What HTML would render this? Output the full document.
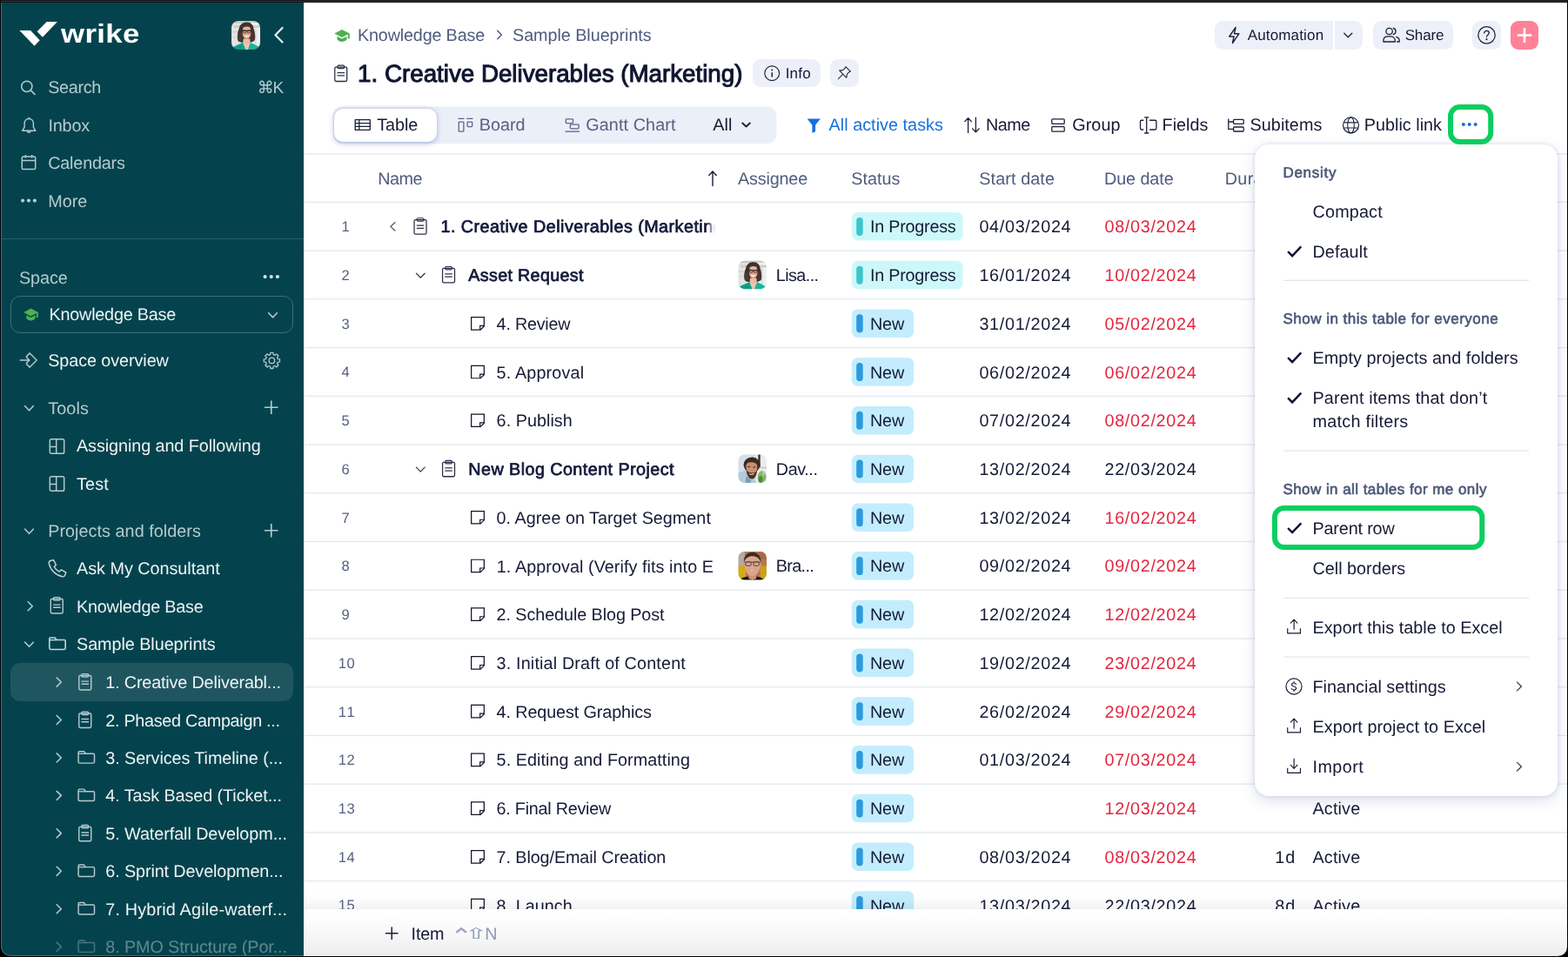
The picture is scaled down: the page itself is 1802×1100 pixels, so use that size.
<!DOCTYPE html>
<html lang="en"><head><meta charset="utf-8"><title>1. Creative Deliverables (Marketing) - Wrike</title>
<style>
html,body{margin:0;padding:0;width:1802px;height:1100px;overflow:hidden;background:#000;}
body{font-family:'Liberation Sans', 'DejaVu Sans', sans-serif;position:relative;-webkit-font-smoothing:antialiased;text-rendering:geometricPrecision;}
.a{position:absolute;display:block;box-sizing:border-box;}
.t{white-space:pre;}
svg{overflow:visible}
</style></head><body>
<div id="app" class="a" style="left:0;top:0;width:1802px;height:1100px;overflow:hidden;will-change:transform;">
<div class="a" style="left:349px;top:0px;width:1453px;height:1100px;background:#ffffff;"></div>
<svg class="a" style="left:349px;top:230px" width="1453" height="4" viewBox="0 0 1453 4"><rect x="0" y="1.75" width="1453" height="1.3" fill="#e3e8f1"/></svg>
<span class="a t" style="top:249px;height:23px;line-height:23px;font-size:16.6px;color:#56617f;left:392.47px;">1</span>
<svg class="a" style="left:448px;top:255px;" width="8" height="12" fill="none"><g transform="translate(0.30 0.10) scale(1.0000 1.0000)"><path d="M5.575 0.625L0.625 5.3L5.575 9.975" stroke="#4a5068" stroke-width="1.25" stroke-linecap="round" stroke-linejoin="round"/></g></svg>
<svg class="a" style="left:475px;top:250px;" width="17" height="21" fill="none"><g transform="translate(0.30 0.10) scale(0.9688 0.9900)"><rect x="0.8" y="2.6" width="14.4" height="16.6" rx="1.4" stroke="#2a2f45" stroke-width="1.3"/><rect x="4" y="0.7" width="8" height="3.4" rx="1.1" stroke="#2a2f45" stroke-width="1.17" fill="none"/><path d="M3.6 9.2H12.4M3.6 12.4H12.4" stroke="#2a2f45" stroke-width="1.3"/></g></svg>
<div class="a" style="left:500px;top:244.4px;width:322px;height:32px;overflow:hidden;-webkit-mask-image:linear-gradient(90deg,#000 0,#000 312px,transparent 322px);mask-image:linear-gradient(90deg,#000 0,#000 312px,transparent 322px);">
<span class="a t" style="top:3px;height:28px;line-height:28px;font-size:19.8px;color:#14193a;-webkit-text-stroke:0.73px #14193a;letter-spacing:0.447px;left:6.51px;">1. Creative Deliverables (Marketing)</span>
</div>
<svg class="a" style="left:976px;top:241px;" width="133" height="38" viewBox="0 0 133 38"><rect x="2.80" y="3.00" width="127.70" height="32.60" rx="7" fill="#cdf8f9"/></svg>
<svg class="a" style="left:982px;top:247px;" width="13" height="27" viewBox="0 0 13 27"><rect x="2.20" y="2.90" width="7.50" height="21.00" rx="3.6" fill="#3cc5cb"/></svg>
<span class="a t" style="top:247px;height:28px;line-height:28px;font-size:19.8px;color:#161a35;letter-spacing:-0.247px;left:1000.01px;">In Progress</span>
<span class="a t" style="top:247px;height:28px;line-height:28px;font-size:19.8px;color:#161a35;letter-spacing:0.685px;left:1125.41px;">04/03/2024</span>
<span class="a t" style="top:247px;height:28px;line-height:28px;font-size:19.8px;color:#e3263e;letter-spacing:0.685px;left:1269.51px;">08/03/2024</span>
<svg class="a" style="left:349px;top:286px" width="1453" height="4" viewBox="0 0 1453 4"><rect x="0" y="1.48" width="1453" height="1.3" fill="#e3e8f1"/></svg>
<span class="a t" style="top:305px;height:23px;line-height:23px;font-size:16.6px;color:#56617f;left:392.47px;">2</span>
<svg class="a" style="left:477px;top:313px;" width="13" height="8" fill="none"><g transform="translate(0.80 0.53) scale(1.0000 1.0000)"><path d="M0.65 0.65L5.5 5.6499999999999995L10.35 0.65" stroke="#3a4058" stroke-width="1.3" stroke-linecap="round" stroke-linejoin="round"/></g></svg>
<svg class="a" style="left:507px;top:305px;" width="18" height="22" fill="none"><g transform="translate(0.80 0.83) scale(0.9688 0.9900)"><rect x="0.8" y="2.6" width="14.4" height="16.6" rx="1.4" stroke="#2a2f45" stroke-width="1.3"/><rect x="4" y="0.7" width="8" height="3.4" rx="1.1" stroke="#2a2f45" stroke-width="1.17" fill="none"/><path d="M3.6 9.2H12.4M3.6 12.4H12.4" stroke="#2a2f45" stroke-width="1.3"/></g></svg>
<span class="a t" style="top:303px;height:28px;line-height:28px;font-size:19.8px;color:#14193a;-webkit-text-stroke:0.73px #14193a;letter-spacing:0.294px;left:538.31px;">Asset Request</span>
<svg class="a" style="left:848px;top:299px;" width="34" height="35" fill="none"><g transform="translate(0.50 0.63) scale(0.9848 0.9848)"><defs><clipPath id="av1"><rect x="0" y="0" width="33" height="33" rx="7"/></clipPath><filter id="av1f" x="-10%" y="-10%" width="120%" height="120%"><feGaussianBlur stdDeviation="0.55"/></filter></defs><g clip-path="url(#av1)"><g filter="url(#av1f)"><rect x="-3" y="-3" width="39" height="39" fill="#e3e3e1"/><rect x="-3" y="-3" width="39" height="5.5" fill="#c9c6be"/><rect x="22" y="2" width="14" height="34" fill="#eef0f3"/><rect x="26.5" y="8" width="2.2" height="20" fill="#d9dadd"/><rect x="3" y="5.2" width="30" height="2.6" fill="#d2cbbd"/><rect x="-2" y="12" width="9" height="1.4" fill="#cfcfd0"/><rect x="-2" y="18" width="8" height="1.2" fill="#d4d4d6"/><path d="M17 1.6C21.5 1.2 25.4 4.4 25.6 9.4C27.6 13.6 27 19.4 25 23.6C23 25.2 20.5 24.6 17.3 24.6C13.8 24.6 10.6 25.4 8.8 23.4C6.6 19.6 6.4 13.8 8.6 9.6C9.4 4.6 12.6 1.8 17 1.6Z" fill="#3d302d"/><ellipse cx="9.4" cy="19" rx="2.6" ry="5" fill="#4a3a35"/><ellipse cx="24.8" cy="18.6" rx="2.4" ry="5" fill="#46362f"/><path d="M13.6 20.5H21.4L21.8 33H12.6Z" fill="#e7bba6"/><ellipse cx="17.5" cy="14" rx="4.9" ry="7" fill="#dfa58d"/><ellipse cx="17.5" cy="9" rx="4.4" ry="2.6" fill="#e6b39c"/><path d="M12.4 11.4H22.6" stroke="#2f2624" stroke-width="1.1"/><rect x="12.9" y="10.9" width="4.1" height="2.9" rx="1" fill="none" stroke="#3a2f2d" stroke-width=".8"/><rect x="18" y="10.9" width="4.1" height="2.9" rx="1" fill="none" stroke="#3a2f2d" stroke-width=".8"/><path d="M14.9 17Q17.5 19.4 20.1 17Q17.5 18 14.9 17Z" fill="#fff" stroke="#fff" stroke-width=".7"/><path d="M-1 36L1.2 30.2L13.2 24.8L17.2 36Z" fill="#0ea68f"/><path d="M34 36L31 29.6L21.8 24.8L18 36Z" fill="#13b59c"/><path d="M3 31L12 27L14 33L4 34Z" fill="#0b8f7b" opacity=".55"/><path d="M13.2 24.8L17.5 33.5L21.8 24.8L17.5 27.6Z" fill="#edc7b4"/></g></g></g></svg>
<span class="a t" style="top:303px;height:28px;line-height:28px;font-size:19.8px;color:#161a35;letter-spacing:-0.583px;left:891.81px;">Lisa...</span>
<svg class="a" style="left:976px;top:297px;" width="133" height="38" viewBox="0 0 133 38"><rect x="2.80" y="2.73" width="127.70" height="32.60" rx="7" fill="#cdf8f9"/></svg>
<svg class="a" style="left:982px;top:303px;" width="13" height="27" viewBox="0 0 13 27"><rect x="2.20" y="2.63" width="7.50" height="21.00" rx="3.6" fill="#3cc5cb"/></svg>
<span class="a t" style="top:303px;height:28px;line-height:28px;font-size:19.8px;color:#161a35;letter-spacing:-0.247px;left:1000.01px;">In Progress</span>
<span class="a t" style="top:303px;height:28px;line-height:28px;font-size:19.8px;color:#161a35;letter-spacing:0.685px;left:1125.41px;">16/01/2024</span>
<span class="a t" style="top:303px;height:28px;line-height:28px;font-size:19.8px;color:#e3263e;letter-spacing:0.685px;left:1269.51px;">10/02/2024</span>
<svg class="a" style="left:349px;top:342px" width="1453" height="4" viewBox="0 0 1453 4"><rect x="0" y="1.21" width="1453" height="1.3" fill="#e3e8f1"/></svg>
<span class="a t" style="top:361px;height:23px;line-height:23px;font-size:16.6px;color:#56617f;left:392.47px;">3</span>
<svg class="a" style="left:541px;top:363px;" width="17" height="18" fill="none"><g transform="translate(0.00 0.96) scale(1.0000 0.9812)"><path d="M0.65 0.65H15.35V11.2L11.2 15.35H0.65Z" stroke="#14162a" stroke-width="1.25" stroke-linejoin="miter"/><path d="M10.7 15.2V10.6H15.3" stroke="#14162a" stroke-width="1.2"/></g></svg>
<span class="a t" style="top:359px;height:28px;line-height:28px;font-size:19.8px;color:#161a35;letter-spacing:-0.235px;left:570.61px;">4. Review</span>
<svg class="a" style="left:976px;top:353px;" width="77" height="38" viewBox="0 0 77 38"><rect x="2.80" y="2.46" width="71.40" height="32.60" rx="7" fill="#c3edfd"/></svg>
<svg class="a" style="left:982px;top:359px;" width="13" height="27" viewBox="0 0 13 27"><rect x="2.20" y="2.36" width="7.50" height="21.00" rx="3.6" fill="#2d9ade"/></svg>
<span class="a t" style="top:359px;height:28px;line-height:28px;font-size:19.8px;color:#161a35;letter-spacing:-0.198px;left:1000.01px;">New</span>
<span class="a t" style="top:359px;height:28px;line-height:28px;font-size:19.8px;color:#161a35;letter-spacing:0.685px;left:1125.41px;">31/01/2024</span>
<span class="a t" style="top:359px;height:28px;line-height:28px;font-size:19.8px;color:#e3263e;letter-spacing:0.685px;left:1269.51px;">05/02/2024</span>
<svg class="a" style="left:349px;top:397px" width="1453" height="4" viewBox="0 0 1453 4"><rect x="0" y="1.94" width="1453" height="1.3" fill="#e3e8f1"/></svg>
<span class="a t" style="top:416px;height:23px;line-height:23px;font-size:16.6px;color:#56617f;left:392.47px;">4</span>
<svg class="a" style="left:541px;top:419px;" width="17" height="18" fill="none"><g transform="translate(0.00 0.69) scale(1.0000 0.9812)"><path d="M0.65 0.65H15.35V11.2L11.2 15.35H0.65Z" stroke="#14162a" stroke-width="1.25" stroke-linejoin="miter"/><path d="M10.7 15.2V10.6H15.3" stroke="#14162a" stroke-width="1.2"/></g></svg>
<span class="a t" style="top:415px;height:28px;line-height:28px;font-size:19.8px;color:#161a35;letter-spacing:0.150px;left:570.61px;">5. Approval</span>
<svg class="a" style="left:976px;top:409px;" width="77" height="38" viewBox="0 0 77 38"><rect x="2.80" y="2.19" width="71.40" height="32.60" rx="7" fill="#c3edfd"/></svg>
<svg class="a" style="left:982px;top:415px;" width="13" height="27" viewBox="0 0 13 27"><rect x="2.20" y="2.09" width="7.50" height="21.00" rx="3.6" fill="#2d9ade"/></svg>
<span class="a t" style="top:415px;height:28px;line-height:28px;font-size:19.8px;color:#161a35;letter-spacing:-0.198px;left:1000.01px;">New</span>
<span class="a t" style="top:415px;height:28px;line-height:28px;font-size:19.8px;color:#161a35;letter-spacing:0.685px;left:1125.41px;">06/02/2024</span>
<span class="a t" style="top:415px;height:28px;line-height:28px;font-size:19.8px;color:#e3263e;letter-spacing:0.685px;left:1269.51px;">06/02/2024</span>
<svg class="a" style="left:349px;top:453px" width="1453" height="4" viewBox="0 0 1453 4"><rect x="0" y="1.67" width="1453" height="1.3" fill="#e3e8f1"/></svg>
<span class="a t" style="top:472px;height:23px;line-height:23px;font-size:16.6px;color:#56617f;left:392.47px;">5</span>
<svg class="a" style="left:541px;top:475px;" width="17" height="18" fill="none"><g transform="translate(0.00 0.42) scale(1.0000 0.9812)"><path d="M0.65 0.65H15.35V11.2L11.2 15.35H0.65Z" stroke="#14162a" stroke-width="1.25" stroke-linejoin="miter"/><path d="M10.7 15.2V10.6H15.3" stroke="#14162a" stroke-width="1.2"/></g></svg>
<span class="a t" style="top:470px;height:28px;line-height:28px;font-size:19.8px;color:#161a35;letter-spacing:0.034px;left:570.61px;">6. Publish</span>
<svg class="a" style="left:976px;top:464px;" width="77" height="38" viewBox="0 0 77 38"><rect x="2.80" y="2.92" width="71.40" height="32.60" rx="7" fill="#c3edfd"/></svg>
<svg class="a" style="left:982px;top:470px;" width="13" height="27" viewBox="0 0 13 27"><rect x="2.20" y="2.82" width="7.50" height="21.00" rx="3.6" fill="#2d9ade"/></svg>
<span class="a t" style="top:470px;height:28px;line-height:28px;font-size:19.8px;color:#161a35;letter-spacing:-0.198px;left:1000.01px;">New</span>
<span class="a t" style="top:470px;height:28px;line-height:28px;font-size:19.8px;color:#161a35;letter-spacing:0.685px;left:1125.41px;">07/02/2024</span>
<span class="a t" style="top:470px;height:28px;line-height:28px;font-size:19.8px;color:#e3263e;letter-spacing:0.685px;left:1269.51px;">08/02/2024</span>
<svg class="a" style="left:349px;top:509px" width="1453" height="4" viewBox="0 0 1453 4"><rect x="0" y="1.40" width="1453" height="1.3" fill="#e3e8f1"/></svg>
<span class="a t" style="top:528px;height:23px;line-height:23px;font-size:16.6px;color:#56617f;left:392.47px;">6</span>
<svg class="a" style="left:477px;top:536px;" width="13" height="8" fill="none"><g transform="translate(0.80 0.45) scale(1.0000 1.0000)"><path d="M0.65 0.65L5.5 5.6499999999999995L10.35 0.65" stroke="#3a4058" stroke-width="1.3" stroke-linecap="round" stroke-linejoin="round"/></g></svg>
<svg class="a" style="left:507px;top:528px;" width="18" height="22" fill="none"><g transform="translate(0.80 0.75) scale(0.9688 0.9900)"><rect x="0.8" y="2.6" width="14.4" height="16.6" rx="1.4" stroke="#2a2f45" stroke-width="1.3"/><rect x="4" y="0.7" width="8" height="3.4" rx="1.1" stroke="#2a2f45" stroke-width="1.17" fill="none"/><path d="M3.6 9.2H12.4M3.6 12.4H12.4" stroke="#2a2f45" stroke-width="1.3"/></g></svg>
<span class="a t" style="top:526px;height:28px;line-height:28px;font-size:19.8px;color:#14193a;-webkit-text-stroke:0.73px #14193a;letter-spacing:0.421px;left:538.31px;">New Blog Content Project</span>
<svg class="a" style="left:848px;top:522px;" width="34" height="35" fill="none"><g transform="translate(0.50 0.55) scale(0.9848 0.9848)"><defs><clipPath id="av2"><rect x="0" y="0" width="33" height="33" rx="7"/></clipPath><filter id="av2f" x="-10%" y="-10%" width="120%" height="120%"><feGaussianBlur stdDeviation="0.55"/></filter></defs><g clip-path="url(#av2)"><g filter="url(#av2f)"><rect x="-3" y="-3" width="39" height="39" fill="#d6dfe8"/><rect x="21" y="-3" width="15" height="39" fill="#ececea"/><rect x="23.2" y="-3" width="2.4" height="18" fill="#2f2f2e"/><rect x="26" y="14.6" width="10" height="1.4" fill="#b9c3cc"/><ellipse cx="27.6" cy="26.5" rx="5" ry="7.5" fill="#86b36a"/><ellipse cx="26" cy="29" rx="2.4" ry="4" fill="#4e8a3c"/><ellipse cx="29.6" cy="22" rx="1.8" ry="2.6" fill="#a7cf8e"/><path d="M-2 36V21.5L8 18.5L18 27L23 36Z" fill="#b4cbdc"/><path d="M9 25L15 30L13 36H8Z" fill="#7f9db5"/><ellipse cx="15.8" cy="12" rx="9.6" ry="9" fill="#4b3527"/><path d="M9.2 14.6C9 9.6 12 7.4 16 7.6C20 7.8 22.4 10.6 22 15.6C21.6 21.6 19.6 26.4 15.6 27C11.8 27 9.6 21.6 9.2 14.6Z" fill="#c98f70"/><path d="M9.2 17C9.8 24.4 12.2 28.4 15.6 28.4S21.4 24.8 22 17.6C20 21 18.4 21.4 15.6 21.2C12.8 21.2 11 20.6 9.2 17Z" fill="#4a3325"/><path d="M12.6 22.6Q15.6 24.2 18.6 22.4Q15.6 23.2 12.6 22.6Z" fill="#f2e4dc" stroke="#f2e4dc" stroke-width=".5"/><path d="M11 14.2H14M17.2 14.6H20.2" stroke="#35251c" stroke-width="1"/><path d="M6.6 11.6C7.6 5.6 13 2.2 18.6 3.6C23.4 4.8 25.6 9.4 24.4 14.4C22.4 10.4 17.4 7.6 11.4 9.4C9.4 10 7.8 11.8 7.4 14.4Z" fill="#3e2a1e"/></g></g></g></svg>
<span class="a t" style="top:526px;height:28px;line-height:28px;font-size:19.8px;color:#161a35;letter-spacing:-0.424px;left:891.81px;">Dav...</span>
<svg class="a" style="left:976px;top:520px;" width="77" height="38" viewBox="0 0 77 38"><rect x="2.80" y="2.65" width="71.40" height="32.60" rx="7" fill="#c3edfd"/></svg>
<svg class="a" style="left:982px;top:526px;" width="13" height="27" viewBox="0 0 13 27"><rect x="2.20" y="2.55" width="7.50" height="21.00" rx="3.6" fill="#2d9ade"/></svg>
<span class="a t" style="top:526px;height:28px;line-height:28px;font-size:19.8px;color:#161a35;letter-spacing:-0.198px;left:1000.01px;">New</span>
<span class="a t" style="top:526px;height:28px;line-height:28px;font-size:19.8px;color:#161a35;letter-spacing:0.685px;left:1125.41px;">13/02/2024</span>
<span class="a t" style="top:526px;height:28px;line-height:28px;font-size:19.8px;color:#161a35;letter-spacing:0.685px;left:1269.51px;">22/03/2024</span>
<svg class="a" style="left:349px;top:565px" width="1453" height="4" viewBox="0 0 1453 4"><rect x="0" y="1.13" width="1453" height="1.3" fill="#e3e8f1"/></svg>
<span class="a t" style="top:584px;height:23px;line-height:23px;font-size:16.6px;color:#56617f;left:392.47px;">7</span>
<svg class="a" style="left:541px;top:586px;" width="17" height="18" fill="none"><g transform="translate(0.00 0.88) scale(1.0000 0.9812)"><path d="M0.65 0.65H15.35V11.2L11.2 15.35H0.65Z" stroke="#14162a" stroke-width="1.25" stroke-linejoin="miter"/><path d="M10.7 15.2V10.6H15.3" stroke="#14162a" stroke-width="1.2"/></g></svg>
<span class="a t" style="top:582px;height:28px;line-height:28px;font-size:19.8px;color:#161a35;letter-spacing:0.012px;left:570.61px;">0. Agree on Target Segment</span>
<svg class="a" style="left:976px;top:576px;" width="77" height="38" viewBox="0 0 77 38"><rect x="2.80" y="2.38" width="71.40" height="32.60" rx="7" fill="#c3edfd"/></svg>
<svg class="a" style="left:982px;top:582px;" width="13" height="27" viewBox="0 0 13 27"><rect x="2.20" y="2.28" width="7.50" height="21.00" rx="3.6" fill="#2d9ade"/></svg>
<span class="a t" style="top:582px;height:28px;line-height:28px;font-size:19.8px;color:#161a35;letter-spacing:-0.198px;left:1000.01px;">New</span>
<span class="a t" style="top:582px;height:28px;line-height:28px;font-size:19.8px;color:#161a35;letter-spacing:0.685px;left:1125.41px;">13/02/2024</span>
<span class="a t" style="top:582px;height:28px;line-height:28px;font-size:19.8px;color:#e3263e;letter-spacing:0.685px;left:1269.51px;">16/02/2024</span>
<svg class="a" style="left:349px;top:620px" width="1453" height="4" viewBox="0 0 1453 4"><rect x="0" y="1.86" width="1453" height="1.3" fill="#e3e8f1"/></svg>
<span class="a t" style="top:639px;height:23px;line-height:23px;font-size:16.6px;color:#56617f;left:392.47px;">8</span>
<svg class="a" style="left:541px;top:642px;" width="17" height="18" fill="none"><g transform="translate(0.00 0.61) scale(1.0000 0.9812)"><path d="M0.65 0.65H15.35V11.2L11.2 15.35H0.65Z" stroke="#14162a" stroke-width="1.25" stroke-linejoin="miter"/><path d="M10.7 15.2V10.6H15.3" stroke="#14162a" stroke-width="1.2"/></g></svg>
<div class="a" style="left:565px;top:634.5px;width:254.5px;height:32px;overflow:hidden;">
<span class="a t" style="top:3px;height:28px;line-height:28px;font-size:19.8px;color:#161a35;letter-spacing:0.060px;left:5.81px;">1. Approval (Verify fits into E</span>
</div>
<svg class="a" style="left:848px;top:634px;" width="34" height="34" fill="none"><g transform="translate(0.50 0.01) scale(0.9848 0.9848)"><defs><clipPath id="av3"><rect x="0" y="0" width="33" height="33" rx="7"/></clipPath><filter id="av3f" x="-10%" y="-10%" width="120%" height="120%"><feGaussianBlur stdDeviation="0.55"/></filter></defs><g clip-path="url(#av3)"><g filter="url(#av3f)"><rect x="-3" y="-3" width="39" height="39" fill="#b8784e"/><rect x="-3" y="-3" width="10.5" height="20" fill="#b3a9a5"/><rect x="24" y="-3" width="12" height="12" fill="#a86a44"/><path d="M-2 36V17.6C1 15.2 6 15 8.6 17.4V36Z" fill="#d4aa12"/><path d="M36 36V18.4C33 15.8 28 16 25.6 18.2V36Z" fill="#c9a214"/><path d="M-1 36C2 30.4 8 29 16.4 29S29 30.4 33 36Z" fill="#14130f"/><path d="M12 26H21V31.5L16.5 33L12 31.5Z" fill="#cf9279"/><path d="M6.9 14.4C6.7 7.4 10.8 3.4 16.4 3.4S26.1 7.4 25.9 14.4C25.6 21.4 22 28.4 16.4 28.4S7.2 21.4 6.9 14.4Z" fill="#dda58b"/><ellipse cx="6.9" cy="16" rx="1.2" ry="2.4" fill="#d2957c"/><ellipse cx="25.9" cy="16" rx="1.2" ry="2.4" fill="#d2957c"/><path d="M6.6 13C5.8 5.4 10.4 0.8 16.4 0.8S27 5.4 26.2 13C24.8 7.4 21 5.4 16.4 5.4S8 7.4 6.6 13Z" fill="#3a2c26"/><path d="M7.2 12.4H25.6" stroke="#3c3230" stroke-width=".9"/><rect x="8.6" y="11.8" width="6.4" height="4.8" rx="1.8" stroke="#4b4141" stroke-width="1" fill="#d8a58f" fill-opacity=".4"/><rect x="17.8" y="11.8" width="6.4" height="4.8" rx="1.8" stroke="#4b4141" stroke-width="1" fill="#d8a58f" fill-opacity=".4"/><path d="M11.6 20.8Q16.4 25 21.2 20.8Q16.4 22.4 11.6 20.8Z" fill="#f8f0eb" stroke="#b98371" stroke-width=".5"/></g></g></g></svg>
<span class="a t" style="top:637px;height:28px;line-height:28px;font-size:19.8px;color:#161a35;letter-spacing:-0.660px;left:891.81px;">Bra...</span>
<svg class="a" style="left:976px;top:632px;" width="77" height="38" viewBox="0 0 77 38"><rect x="2.80" y="2.11" width="71.40" height="32.60" rx="7" fill="#c3edfd"/></svg>
<svg class="a" style="left:982px;top:638px;" width="13" height="27" viewBox="0 0 13 27"><rect x="2.20" y="2.01" width="7.50" height="21.00" rx="3.6" fill="#2d9ade"/></svg>
<span class="a t" style="top:637px;height:28px;line-height:28px;font-size:19.8px;color:#161a35;letter-spacing:-0.198px;left:1000.01px;">New</span>
<span class="a t" style="top:637px;height:28px;line-height:28px;font-size:19.8px;color:#161a35;letter-spacing:0.685px;left:1125.41px;">09/02/2024</span>
<span class="a t" style="top:637px;height:28px;line-height:28px;font-size:19.8px;color:#e3263e;letter-spacing:0.685px;left:1269.51px;">09/02/2024</span>
<svg class="a" style="left:349px;top:676px" width="1453" height="4" viewBox="0 0 1453 4"><rect x="0" y="1.59" width="1453" height="1.3" fill="#e3e8f1"/></svg>
<span class="a t" style="top:695px;height:23px;line-height:23px;font-size:16.6px;color:#56617f;left:392.47px;">9</span>
<svg class="a" style="left:541px;top:698px;" width="17" height="18" fill="none"><g transform="translate(0.00 0.34) scale(1.0000 0.9812)"><path d="M0.65 0.65H15.35V11.2L11.2 15.35H0.65Z" stroke="#14162a" stroke-width="1.25" stroke-linejoin="miter"/><path d="M10.7 15.2V10.6H15.3" stroke="#14162a" stroke-width="1.2"/></g></svg>
<span class="a t" style="top:693px;height:28px;line-height:28px;font-size:19.8px;color:#161a35;letter-spacing:-0.084px;left:570.61px;">2. Schedule Blog Post</span>
<svg class="a" style="left:976px;top:687px;" width="77" height="38" viewBox="0 0 77 38"><rect x="2.80" y="2.84" width="71.40" height="32.60" rx="7" fill="#c3edfd"/></svg>
<svg class="a" style="left:982px;top:693px;" width="13" height="27" viewBox="0 0 13 27"><rect x="2.20" y="2.74" width="7.50" height="21.00" rx="3.6" fill="#2d9ade"/></svg>
<span class="a t" style="top:693px;height:28px;line-height:28px;font-size:19.8px;color:#161a35;letter-spacing:-0.198px;left:1000.01px;">New</span>
<span class="a t" style="top:693px;height:28px;line-height:28px;font-size:19.8px;color:#161a35;letter-spacing:0.685px;left:1125.41px;">12/02/2024</span>
<span class="a t" style="top:693px;height:28px;line-height:28px;font-size:19.8px;color:#e3263e;letter-spacing:0.685px;left:1269.51px;">12/02/2024</span>
<svg class="a" style="left:349px;top:732px" width="1453" height="4" viewBox="0 0 1453 4"><rect x="0" y="1.32" width="1453" height="1.3" fill="#e3e8f1"/></svg>
<span class="a t" style="top:751px;height:23px;line-height:23px;font-size:16.6px;color:#56617f;letter-spacing:0.542px;left:388.77px;">10</span>
<svg class="a" style="left:541px;top:754px;" width="17" height="17" fill="none"><g transform="translate(0.00 0.07) scale(1.0000 0.9812)"><path d="M0.65 0.65H15.35V11.2L11.2 15.35H0.65Z" stroke="#14162a" stroke-width="1.25" stroke-linejoin="miter"/><path d="M10.7 15.2V10.6H15.3" stroke="#14162a" stroke-width="1.2"/></g></svg>
<span class="a t" style="top:749px;height:28px;line-height:28px;font-size:19.8px;color:#161a35;letter-spacing:0.149px;left:570.61px;">3. Initial Draft of Content</span>
<svg class="a" style="left:976px;top:743px;" width="77" height="38" viewBox="0 0 77 38"><rect x="2.80" y="2.57" width="71.40" height="32.60" rx="7" fill="#c3edfd"/></svg>
<svg class="a" style="left:982px;top:749px;" width="13" height="27" viewBox="0 0 13 27"><rect x="2.20" y="2.47" width="7.50" height="21.00" rx="3.6" fill="#2d9ade"/></svg>
<span class="a t" style="top:749px;height:28px;line-height:28px;font-size:19.8px;color:#161a35;letter-spacing:-0.198px;left:1000.01px;">New</span>
<span class="a t" style="top:749px;height:28px;line-height:28px;font-size:19.8px;color:#161a35;letter-spacing:0.685px;left:1125.41px;">19/02/2024</span>
<span class="a t" style="top:749px;height:28px;line-height:28px;font-size:19.8px;color:#e3263e;letter-spacing:0.685px;left:1269.51px;">23/02/2024</span>
<svg class="a" style="left:349px;top:788px" width="1453" height="4" viewBox="0 0 1453 4"><rect x="0" y="1.05" width="1453" height="1.3" fill="#e3e8f1"/></svg>
<span class="a t" style="top:807px;height:23px;line-height:23px;font-size:16.6px;color:#56617f;letter-spacing:1.777px;left:388.77px;">11</span>
<svg class="a" style="left:541px;top:809px;" width="17" height="18" fill="none"><g transform="translate(0.00 0.80) scale(1.0000 0.9812)"><path d="M0.65 0.65H15.35V11.2L11.2 15.35H0.65Z" stroke="#14162a" stroke-width="1.25" stroke-linejoin="miter"/><path d="M10.7 15.2V10.6H15.3" stroke="#14162a" stroke-width="1.2"/></g></svg>
<span class="a t" style="top:805px;height:28px;line-height:28px;font-size:19.8px;color:#161a35;letter-spacing:-0.114px;left:570.61px;">4. Request Graphics</span>
<svg class="a" style="left:976px;top:799px;" width="77" height="38" viewBox="0 0 77 38"><rect x="2.80" y="2.30" width="71.40" height="32.60" rx="7" fill="#c3edfd"/></svg>
<svg class="a" style="left:982px;top:805px;" width="13" height="27" viewBox="0 0 13 27"><rect x="2.20" y="2.20" width="7.50" height="21.00" rx="3.6" fill="#2d9ade"/></svg>
<span class="a t" style="top:805px;height:28px;line-height:28px;font-size:19.8px;color:#161a35;letter-spacing:-0.198px;left:1000.01px;">New</span>
<span class="a t" style="top:805px;height:28px;line-height:28px;font-size:19.8px;color:#161a35;letter-spacing:0.685px;left:1125.41px;">26/02/2024</span>
<span class="a t" style="top:805px;height:28px;line-height:28px;font-size:19.8px;color:#e3263e;letter-spacing:0.685px;left:1269.51px;">29/02/2024</span>
<svg class="a" style="left:349px;top:843px" width="1453" height="4" viewBox="0 0 1453 4"><rect x="0" y="1.78" width="1453" height="1.3" fill="#e3e8f1"/></svg>
<span class="a t" style="top:862px;height:23px;line-height:23px;font-size:16.6px;color:#56617f;letter-spacing:0.542px;left:388.77px;">12</span>
<svg class="a" style="left:541px;top:865px;" width="17" height="18" fill="none"><g transform="translate(0.00 0.53) scale(1.0000 0.9812)"><path d="M0.65 0.65H15.35V11.2L11.2 15.35H0.65Z" stroke="#14162a" stroke-width="1.25" stroke-linejoin="miter"/><path d="M10.7 15.2V10.6H15.3" stroke="#14162a" stroke-width="1.2"/></g></svg>
<span class="a t" style="top:860px;height:28px;line-height:28px;font-size:19.8px;color:#161a35;letter-spacing:0.053px;left:570.61px;">5. Editing and Formatting</span>
<svg class="a" style="left:976px;top:855px;" width="77" height="38" viewBox="0 0 77 38"><rect x="2.80" y="2.03" width="71.40" height="32.60" rx="7" fill="#c3edfd"/></svg>
<svg class="a" style="left:982px;top:860px;" width="13" height="27" viewBox="0 0 13 27"><rect x="2.20" y="2.93" width="7.50" height="21.00" rx="3.6" fill="#2d9ade"/></svg>
<span class="a t" style="top:860px;height:28px;line-height:28px;font-size:19.8px;color:#161a35;letter-spacing:-0.198px;left:1000.01px;">New</span>
<span class="a t" style="top:860px;height:28px;line-height:28px;font-size:19.8px;color:#161a35;letter-spacing:0.685px;left:1125.41px;">01/03/2024</span>
<span class="a t" style="top:860px;height:28px;line-height:28px;font-size:19.8px;color:#e3263e;letter-spacing:0.685px;left:1269.51px;">07/03/2024</span>
<svg class="a" style="left:349px;top:899px" width="1453" height="4" viewBox="0 0 1453 4"><rect x="0" y="1.51" width="1453" height="1.3" fill="#e3e8f1"/></svg>
<span class="a t" style="top:918px;height:23px;line-height:23px;font-size:16.6px;color:#56617f;letter-spacing:0.542px;left:388.77px;">13</span>
<svg class="a" style="left:541px;top:921px;" width="17" height="17" fill="none"><g transform="translate(0.00 0.26) scale(1.0000 0.9812)"><path d="M0.65 0.65H15.35V11.2L11.2 15.35H0.65Z" stroke="#14162a" stroke-width="1.25" stroke-linejoin="miter"/><path d="M10.7 15.2V10.6H15.3" stroke="#14162a" stroke-width="1.2"/></g></svg>
<span class="a t" style="top:916px;height:28px;line-height:28px;font-size:19.8px;color:#161a35;letter-spacing:-0.254px;left:570.61px;">6. Final Review</span>
<svg class="a" style="left:976px;top:910px;" width="77" height="38" viewBox="0 0 77 38"><rect x="2.80" y="2.76" width="71.40" height="32.60" rx="7" fill="#c3edfd"/></svg>
<svg class="a" style="left:982px;top:916px;" width="13" height="27" viewBox="0 0 13 27"><rect x="2.20" y="2.66" width="7.50" height="21.00" rx="3.6" fill="#2d9ade"/></svg>
<span class="a t" style="top:916px;height:28px;line-height:28px;font-size:19.8px;color:#161a35;letter-spacing:-0.198px;left:1000.01px;">New</span>
<span class="a t" style="top:916px;height:28px;line-height:28px;font-size:19.8px;color:#e3263e;letter-spacing:0.685px;left:1269.51px;">12/03/2024</span>
<span class="a t" style="top:916px;height:28px;line-height:28px;font-size:19.8px;color:#161a35;letter-spacing:0.162px;left:1508.51px;">Active</span>
<svg class="a" style="left:349px;top:955px" width="1453" height="4" viewBox="0 0 1453 4"><rect x="0" y="1.24" width="1453" height="1.3" fill="#e3e8f1"/></svg>
<span class="a t" style="top:974px;height:23px;line-height:23px;font-size:16.6px;color:#56617f;letter-spacing:0.542px;left:388.77px;">14</span>
<svg class="a" style="left:541px;top:976px;" width="17" height="18" fill="none"><g transform="translate(0.00 0.99) scale(1.0000 0.9812)"><path d="M0.65 0.65H15.35V11.2L11.2 15.35H0.65Z" stroke="#14162a" stroke-width="1.25" stroke-linejoin="miter"/><path d="M10.7 15.2V10.6H15.3" stroke="#14162a" stroke-width="1.2"/></g></svg>
<span class="a t" style="top:972px;height:28px;line-height:28px;font-size:19.8px;color:#161a35;letter-spacing:-0.101px;left:570.61px;">7. Blog/Email Creation</span>
<svg class="a" style="left:976px;top:966px;" width="77" height="38" viewBox="0 0 77 38"><rect x="2.80" y="2.49" width="71.40" height="32.60" rx="7" fill="#c3edfd"/></svg>
<svg class="a" style="left:982px;top:972px;" width="13" height="27" viewBox="0 0 13 27"><rect x="2.20" y="2.39" width="7.50" height="21.00" rx="3.6" fill="#2d9ade"/></svg>
<span class="a t" style="top:972px;height:28px;line-height:28px;font-size:19.8px;color:#161a35;letter-spacing:-0.198px;left:1000.01px;">New</span>
<span class="a t" style="top:972px;height:28px;line-height:28px;font-size:19.8px;color:#161a35;letter-spacing:0.685px;left:1125.41px;">08/03/2024</span>
<span class="a t" style="top:972px;height:28px;line-height:28px;font-size:19.8px;color:#e3263e;letter-spacing:0.685px;left:1269.51px;">08/03/2024</span>
<span class="a t" style="top:972px;height:28px;line-height:28px;font-size:19.8px;color:#161a35;letter-spacing:1.167px;left:1465.21px;">1d</span>
<span class="a t" style="top:972px;height:28px;line-height:28px;font-size:19.8px;color:#161a35;letter-spacing:0.162px;left:1508.51px;">Active</span>
<svg class="a" style="left:349px;top:1010px" width="1453" height="4" viewBox="0 0 1453 4"><rect x="0" y="1.97" width="1453" height="1.3" fill="#e3e8f1"/></svg>
<span class="a t" style="top:1029px;height:23px;line-height:23px;font-size:16.6px;color:#56617f;letter-spacing:0.542px;left:388.77px;">15</span>
<svg class="a" style="left:541px;top:1032px;" width="17" height="18" fill="none"><g transform="translate(0.00 0.72) scale(1.0000 0.9812)"><path d="M0.65 0.65H15.35V11.2L11.2 15.35H0.65Z" stroke="#14162a" stroke-width="1.25" stroke-linejoin="miter"/><path d="M10.7 15.2V10.6H15.3" stroke="#14162a" stroke-width="1.2"/></g></svg>
<span class="a t" style="top:1028px;height:28px;line-height:28px;font-size:19.8px;color:#161a35;letter-spacing:0.035px;left:570.61px;">8. Launch</span>
<svg class="a" style="left:976px;top:1022px;" width="77" height="38" viewBox="0 0 77 38"><rect x="2.80" y="2.22" width="71.40" height="32.60" rx="7" fill="#c3edfd"/></svg>
<svg class="a" style="left:982px;top:1028px;" width="13" height="27" viewBox="0 0 13 27"><rect x="2.20" y="2.12" width="7.50" height="21.00" rx="3.6" fill="#2d9ade"/></svg>
<span class="a t" style="top:1028px;height:28px;line-height:28px;font-size:19.8px;color:#161a35;letter-spacing:-0.198px;left:1000.01px;">New</span>
<span class="a t" style="top:1028px;height:28px;line-height:28px;font-size:19.8px;color:#161a35;letter-spacing:0.685px;left:1125.41px;">13/03/2024</span>
<span class="a t" style="top:1028px;height:28px;line-height:28px;font-size:19.8px;color:#161a35;letter-spacing:0.685px;left:1269.51px;">22/03/2024</span>
<span class="a t" style="top:1028px;height:28px;line-height:28px;font-size:19.8px;color:#161a35;letter-spacing:1.167px;left:1465.21px;">8d</span>
<span class="a t" style="top:1028px;height:28px;line-height:28px;font-size:19.8px;color:#161a35;letter-spacing:0.162px;left:1508.51px;">Active</span>
<svg class="a" style="left:384px;top:33px;" width="19" height="17" fill="none"><g transform="translate(0.00 0.50) scale(0.7500 0.7500)"><path fill="#4fb04f" d="M12 0.5L0.3 6.6L12 12.7L21 8V14.8H23.7V6.6Z"/><path fill="#4fb04f" d="M4.6 10.9V15.6C6.3 18 9 19.3 12 19.3S17.7 18 19.4 15.6V10.9L12 14.8Z"/></g></svg>
<span class="a t" style="top:27px;height:28px;line-height:28px;font-size:19.8px;color:#4f5b7d;letter-spacing:-0.176px;left:411.01px;">Knowledge Base</span>
<svg class="a" style="left:571px;top:34px;" width="7" height="13" fill="none"><g transform="translate(0.00 0.50) scale(1.0000 1.0000)"><path d="M0.7 0.7L5.3 5.5L0.7 10.3" stroke="#4f5b7d" stroke-width="1.4" stroke-linecap="round" stroke-linejoin="round"/></g></svg>
<span class="a t" style="top:27px;height:28px;line-height:28px;font-size:19.8px;color:#4f5b7d;letter-spacing:-0.053px;left:589.01px;">Sample Blueprints</span>
<svg class="a" style="left:384px;top:74px;" width="17" height="22" fill="none"><g transform="translate(0.00 0.50) scale(0.9688 0.9900)"><rect x="0.8" y="2.6" width="14.4" height="16.6" rx="1.4" stroke="#2a2f45" stroke-width="1.3"/><rect x="4" y="0.7" width="8" height="3.4" rx="1.1" stroke="#2a2f45" stroke-width="1.17" fill="none"/><path d="M3.6 9.2H12.4M3.6 12.4H12.4" stroke="#2a2f45" stroke-width="1.3"/></g></svg>
<span class="a t" style="top:65px;height:39px;line-height:39px;font-size:27.8px;color:#0f1530;-webkit-text-stroke:1.03px #0f1530;letter-spacing:-0.029px;left:411.11px;">1. Creative Deliverables (Marketing)</span>
<div class="a" style="left:865px;top:67.5px;width:78px;height:32.5px;background:#edf0f8;border-radius:9px;"></div>
<svg class="a" style="left:878px;top:75px;" width="20" height="20" fill="none"><g transform="translate(0.00 0.00) scale(0.7708 0.7708)"><circle cx="12" cy="12" r="10.9" stroke="#1b2038" stroke-width="1.45"/><path d="M12 10.6V17.6" stroke="#1b2038" stroke-width="1.9"/><circle cx="12" cy="7.2" r="1.25" fill="#1b2038"/></g></svg>
<span class="a t" style="top:73px;height:24px;line-height:24px;font-size:17px;color:#161a35;letter-spacing:0.195px;left:902.65px;">Info</span>
<div class="a" style="left:954px;top:67.5px;width:32.5px;height:32.5px;background:#edf0f8;border-radius:9px;"></div>
<svg class="a" style="left:961px;top:75px;" width="19" height="19" fill="none"><g transform="translate(0.50 0.00) scale(0.7292 0.7292)"><path d="M14.2 2.2L21.8 9.8L19.8 10.6L16.3 14.1L15.6 19.6L4.4 8.4L9.9 7.7L13.4 4.2Z" stroke="#1b2038" stroke-width="1.45" stroke-linejoin="round"/><path d="M9.4 14.6L2.4 21.6" stroke="#1b2038" stroke-width="1.45" stroke-linecap="round"/></g></svg>
<div class="a" style="left:1396px;top:24px;width:136px;height:33px;background:#edf0f8;border-radius:9px 0 0 9px;"></div>
<div class="a" style="left:1534px;top:24px;width:32px;height:33px;background:#edf0f8;border-radius:0 9px 9px 0;"></div>
<svg class="a" style="left:1411px;top:30px;" width="15" height="22" fill="none"><g transform="translate(0.50 0.50) scale(0.9926 0.9901)"><path d="M8.6 1L1.2 11.6H6.6L5 19.2L12.4 8.4H7Z" stroke="#1b2038" stroke-width="1.4" stroke-linejoin="round"/></g></svg>
<span class="a t" style="top:29px;height:24px;line-height:24px;font-size:17px;color:#161a35;letter-spacing:0.161px;left:1433.65px;">Automation</span>
<svg class="a" style="left:1544px;top:37px;" width="12" height="8" fill="none"><g transform="translate(0.00 0.50) scale(1.0000 1.0000)"><path d="M0.75 0.75L5.25 5.25L9.75 0.75" stroke="#2a2f45" stroke-width="1.5" stroke-linecap="round" stroke-linejoin="round"/></g></svg>
<div class="a" style="left:1577.5px;top:24px;width:92.5px;height:33px;background:#edf0f8;border-radius:9px;"></div>
<svg class="a" style="left:1589px;top:31px;" width="21" height="19" fill="none"><g transform="translate(0.00 0.00) scale(1.0000 1.0000)"><circle cx="7.6" cy="5" r="3.7" stroke="#1b2038" stroke-width="1.3"/><path d="M0.9 17V15.6C0.9 12.6 3.3 10.9 6.2 10.9H9C11.9 10.9 14.3 12.6 14.3 15.6V17Z" stroke="#1b2038" stroke-width="1.3" stroke-linejoin="round"/><path d="M12.3 1.5A3.6 3.6 0 0 1 12.3 8.5M15.6 11.3C17.8 11.9 19.2 13.5 19.2 15.8V17H16.6" stroke="#1b2038" stroke-width="1.3" stroke-linecap="round" stroke-linejoin="round"/></g></svg>
<span class="a t" style="top:29px;height:24px;line-height:24px;font-size:17px;color:#161a35;letter-spacing:-0.107px;left:1614.65px;">Share</span>
<div class="a" style="left:1692px;top:24px;width:33px;height:33px;background:#edf0f8;border-radius:9px;"></div>
<svg class="a" style="left:1697px;top:29px;" width="24" height="24" fill="none"><g transform="translate(0.80 0.70) scale(0.8917 0.8917)"><circle cx="12" cy="12" r="10.9" stroke="#1b2038" stroke-width="1.4"/><path d="M8.9 9.4C8.9 7.6 10.2 6.4 12 6.4S15.1 7.6 15.1 9.2C15.1 11.5 12 11.6 12 14.2" stroke="#1b2038" stroke-width="1.45" stroke-linecap="round"/><circle cx="12" cy="17.3" r="1.15" fill="#1b2038"/></g></svg>
<div class="a" style="left:1736px;top:24px;width:32px;height:33px;background:#ff8297;border-radius:9px;"></div>
<svg class="a" style="left:1743px;top:32px;" width="19" height="18" fill="none"><g transform="translate(0.80 0.30) scale(1.0000 1.0000)"><path d="M8.2 0V16.4M0 8.2H16.4" stroke="#ffffff" stroke-width="2.6"/></g></svg>
<svg class="a" style="left:380px;top:120px;" width="516" height="48" viewBox="0 0 516 48"><rect x="2.50" y="2.50" width="510.00" height="42.70" rx="11" fill="#ebeff8"/></svg>
<div class="a" style="left:384px;top:125px;width:118px;height:38px;background:#ffffff;border-radius:10px;box-shadow:0 1.5px 6px rgba(60,90,170,.36),0 0 1.5px rgba(60,90,170,.2);"></div>
<svg class="a" style="left:407px;top:137px;" width="20" height="14" fill="none"><g transform="translate(0.50 0.00) scale(1.0000 1.0000)"><rect x="0.7" y="0.7" width="17.1" height="11.6" rx="0.3" stroke="#1b2038" stroke-width="1.3"/><path d="M0.7 4.6H17.8M0.7 8.4H17.8M5.3 0.7V12.3" stroke="#1b2038" stroke-width="1.25"/></g></svg>
<span class="a t" style="top:130px;height:28px;line-height:28px;font-size:19.8px;color:#161a35;letter-spacing:-0.078px;left:433.31px;">Table</span>
<svg class="a" style="left:526px;top:135px;" width="19" height="18" fill="none"><g transform="translate(0.50 0.50) scale(1.0000 0.9940)"><path d="M0 0.8H7M9.8 0.8H17" stroke="#5a6788" stroke-width="1.3"/><rect x="0.8" y="4.6" width="5.6" height="11.2" rx="0.8" stroke="#5a6788" stroke-width="1.3"/><rect x="10.6" y="4.6" width="5.6" height="5.6" rx="0.8" stroke="#5a6788" stroke-width="1.3"/></g></svg>
<span class="a t" style="top:130px;height:28px;line-height:28px;font-size:19.8px;color:#56617f;letter-spacing:-0.028px;left:550.81px;">Board</span>
<svg class="a" style="left:649px;top:136px;" width="18" height="17" fill="none"><g transform="translate(0.50 0.00) scale(1.0000 1.0000)"><rect x="0.8" y="0.8" width="8.2" height="4.8" rx="0.8" stroke="#5a6788" stroke-width="1.3"/><rect x="5.8" y="7.2" width="9.8" height="4.6" rx="0.8" stroke="#5a6788" stroke-width="1.3"/><path d="M0 15.2H16.5" stroke="#5a6788" stroke-width="1.3"/></g></svg>
<span class="a t" style="top:130px;height:28px;line-height:28px;font-size:19.8px;color:#56617f;letter-spacing:0.093px;left:673.31px;">Gantt Chart</span>
<span class="a t" style="top:130px;height:28px;line-height:28px;font-size:19.8px;color:#161a35;left:819.31px;">All</span>
<svg class="a" style="left:852px;top:140px;" width="12" height="8" fill="none"><g transform="translate(0.30 0.50) scale(1.0000 1.0000)"><path d="M0.95 0.95L5.25 5.05L9.55 0.95" stroke="#1b2038" stroke-width="1.9" stroke-linecap="round" stroke-linejoin="round"/></g></svg>
<svg class="a" style="left:927px;top:136px;" width="17" height="18" fill="none"><g transform="translate(0.50 0.00) scale(1.0000 0.9884)"><path fill="#1670dd" d="M0.2 0.4H15.3L9.6 7.8V15.4L5.9 17V7.8Z"/></g></svg>
<span class="a t" style="top:130px;height:28px;line-height:28px;font-size:19.8px;color:#1670dd;letter-spacing:0.037px;left:952.51px;">All active tasks</span>
<svg class="a" style="left:1108px;top:134px;" width="19" height="20" fill="none"><g transform="translate(0.00 0.50) scale(1.0000 0.9946)"><path d="M4.6 18V1.4M0.8 5.2L4.6 1.2L8.4 5.2M13.4 0.6V17.2M9.6 13.4L13.4 17.4L17.2 13.4" stroke="#1b2038" stroke-width="1.3" stroke-linejoin="round" stroke-linecap="round"/></g></svg>
<span class="a t" style="top:130px;height:28px;line-height:28px;font-size:19.8px;color:#161a35;letter-spacing:-0.533px;left:1133.01px;">Name</span>
<svg class="a" style="left:1208px;top:136px;" width="17" height="17" fill="none"><g transform="translate(0.00 0.00) scale(1.0000 1.0000)"><rect x="0.8" y="0.8" width="14.4" height="5.6" rx="0.9" stroke="#1b2038" stroke-width="1.3"/><rect x="0.8" y="9.6" width="14.4" height="5.6" rx="0.9" stroke="#1b2038" stroke-width="1.3"/></g></svg>
<span class="a t" style="top:130px;height:28px;line-height:28px;font-size:19.8px;color:#161a35;letter-spacing:0.050px;left:1232.31px;">Group</span>
<svg class="a" style="left:1309px;top:134px;" width="22" height="21" fill="none"><g transform="translate(0.70 0.00) scale(1.0000 1.0154)"><path d="M4.6 4.2H2.2C1.4 4.2 0.8 4.8 0.8 5.6V13.4C0.8 14.2 1.4 14.8 2.2 14.8H4.6M11.4 4.2H17.8C18.6 4.2 19.2 4.8 19.2 5.6V13.4C19.2 14.2 18.6 14.8 17.8 14.8H11.4" stroke="#1b2038" stroke-width="1.3"/><path d="M8 1V18.4M5.4 0.8H10.6M5.4 18.7H10.6" stroke="#1b2038" stroke-width="1.3"/></g></svg>
<span class="a t" style="top:130px;height:28px;line-height:28px;font-size:19.8px;color:#161a35;letter-spacing:-0.020px;left:1335.61px;">Fields</span>
<svg class="a" style="left:1411px;top:136px;" width="20" height="17" fill="none"><g transform="translate(0.00 0.00) scale(1.0000 1.0000)"><path d="M0.8 0.4V12.4H6.4M0.8 4H6.4" stroke="#1b2038" stroke-width="1.3"/><rect x="6.6" y="1.4" width="11.6" height="5" rx="0.9" stroke="#1b2038" stroke-width="1.3"/><rect x="6.6" y="10" width="11.6" height="5" rx="0.9" stroke="#1b2038" stroke-width="1.3"/></g></svg>
<span class="a t" style="top:130px;height:28px;line-height:28px;font-size:19.8px;color:#161a35;letter-spacing:0.031px;left:1436.61px;">Subitems</span>
<svg class="a" style="left:1542px;top:134px;" width="22" height="21" fill="none"><g transform="translate(0.60 0.00) scale(0.8250 0.8250)"><circle cx="12" cy="12" r="10.9" stroke="#1b2038" stroke-width="1.4"/><ellipse cx="12" cy="12" rx="4.6" ry="10.9" stroke="#1b2038" stroke-width="1.3"/><path d="M1.8 8.3H22.2M1.8 15.7H22.2" stroke="#1b2038" stroke-width="1.3"/></g></svg>
<span class="a t" style="top:130px;height:28px;line-height:28px;font-size:19.8px;color:#161a35;letter-spacing:0.012px;left:1567.81px;">Public link</span>
<svg class="a" style="left:1679px;top:140px;" width="20" height="7" fill="none"><g transform="translate(0.80 0.90) scale(1.0000 1.0000)"><circle cx="2.05" cy="2.05" r="2.05" fill="#1670dd"/><circle cx="8.95" cy="2.05" r="2.05" fill="#1670dd"/><circle cx="15.849999999999998" cy="2.05" r="2.05" fill="#1670dd"/></g></svg>
<svg class="a" style="left:349px;top:175px" width="1453" height="4" viewBox="0 0 1453 4"><rect x="0" y="1.20" width="1453" height="1.3" fill="#e3e8f1"/></svg>
<span class="a t" style="top:192px;height:28px;line-height:28px;font-size:19.8px;color:#4f5b7d;letter-spacing:-0.533px;left:434.31px;">Name</span>
<svg class="a" style="left:814px;top:196px;" width="11" height="19" fill="none"><g transform="translate(0.00 0.00) scale(1.0000 1.0000)"><path d="M5 17.6V1M0.8 5.4L5 1L9.2 5.4" stroke="#1b2038" stroke-width="1.4" stroke-linecap="round" stroke-linejoin="round"/></g></svg>
<span class="a t" style="top:192px;height:28px;line-height:28px;font-size:19.8px;color:#4f5b7d;letter-spacing:-0.173px;left:848.01px;">Assignee</span>
<span class="a t" style="top:192px;height:28px;line-height:28px;font-size:19.8px;color:#4f5b7d;letter-spacing:0.018px;left:978.31px;">Status</span>
<span class="a t" style="top:192px;height:28px;line-height:28px;font-size:19.8px;color:#4f5b7d;letter-spacing:0.100px;left:1125.31px;">Start date</span>
<span class="a t" style="top:192px;height:28px;line-height:28px;font-size:19.8px;color:#4f5b7d;letter-spacing:-0.088px;left:1269.01px;">Due date</span>
<span class="a t" style="top:192px;height:28px;line-height:28px;font-size:19.8px;color:#4f5b7d;letter-spacing:0.272px;left:1407.81px;">Duration</span>
<div class="a" style="left:349px;top:1027px;width:1453px;height:18px;background:linear-gradient(180deg,rgba(20,25,45,0) 0%,rgba(20,25,45,.02) 50%,rgba(20,25,45,.06) 100%);"></div>
<div class="a" style="left:349px;top:1045px;width:1453px;height:55px;background:linear-gradient(180deg,#ffffff 0%,#fcfcfc 30%,#f4f4f4 70%,#ebebeb 100%);"></div>
<svg class="a" style="left:443px;top:1065px;" width="16" height="16" fill="none"><g transform="translate(0.00 0.50) scale(1.0000 1.0000)"><path d="M7.25 0V14.5M0 7.25H14.5" stroke="#1b2038" stroke-width="1.5"/></g></svg>
<span class="a t" style="top:1060px;height:28px;line-height:28px;font-size:19.8px;color:#161a35;letter-spacing:-0.167px;left:472.61px;">Item</span>
<span class="a t" style="top:1063px;height:28px;line-height:28px;font-size:19.8px;color:#9ca6bf;left:521.71px;transform:scale(1.56,1.3);transform-origin:50% 50%;">⌃</span>
<span class="a t" style="top:1060px;height:28px;line-height:28px;font-size:19.8px;color:#8e99b5;left:538.51px;transform:scale(1.66,0.88);transform-origin:50% 50%;">⇧</span>
<span class="a t" style="top:1060px;height:28px;line-height:28px;font-size:19.8px;color:#8e99b5;left:557.31px;">N</span>
<div class="a" style="left:1442px;top:166px;width:348px;height:749px;background:#ffffff;border-radius:16px;box-shadow:0 5px 16px rgba(50,70,130,.17),0 0 4px rgba(50,70,130,.16);"></div>
<span class="a t" style="top:187px;height:24px;line-height:24px;font-size:17px;color:#4c5878;-webkit-text-stroke:0.63px #4c5878;letter-spacing:0.710px;left:1474.45px;">Density</span>
<span class="a t" style="top:230px;height:28px;line-height:28px;font-size:19.8px;color:#161a35;letter-spacing:0.171px;left:1508.51px;">Compact</span>
<svg class="a" style="left:1479px;top:282px;" width="19" height="15" fill="none"><g transform="translate(0.20 0.40) scale(1.0000 1.0000)"><path d="M0.9 6.7L5.9 11.8L16.1 1.0" stroke="#0f1230" stroke-width="2.45" stroke-linejoin="miter"/></g></svg>
<span class="a t" style="top:276px;height:28px;line-height:28px;font-size:19.8px;color:#161a35;letter-spacing:0.083px;left:1508.51px;">Default</span>
<svg class="a" style="left:1475.3px;top:320px" width="282.3" height="4" viewBox="0 0 282.3 4"><rect x="0" y="1.70" width="282.3" height="1.3" fill="#e3e8f1"/></svg>
<span class="a t" style="top:355px;height:24px;line-height:24px;font-size:17px;color:#4c5878;-webkit-text-stroke:0.63px #4c5878;letter-spacing:0.493px;left:1474.45px;">Show in this table for everyone</span>
<svg class="a" style="left:1479px;top:404px;" width="19" height="15" fill="none"><g transform="translate(0.20 0.40) scale(1.0000 1.0000)"><path d="M0.9 6.7L5.9 11.8L16.1 1.0" stroke="#0f1230" stroke-width="2.45" stroke-linejoin="miter"/></g></svg>
<span class="a t" style="top:398px;height:28px;line-height:28px;font-size:19.8px;color:#161a35;letter-spacing:0.079px;left:1508.51px;">Empty projects and folders</span>
<svg class="a" style="left:1479px;top:450px;" width="19" height="16" fill="none"><g transform="translate(0.20 0.60) scale(1.0000 1.0000)"><path d="M0.9 6.7L5.9 11.8L16.1 1.0" stroke="#0f1230" stroke-width="2.45" stroke-linejoin="miter"/></g></svg>
<span class="a t" style="top:444px;height:28px;line-height:28px;font-size:19.8px;color:#161a35;letter-spacing:0.126px;left:1508.51px;">Parent items that don’t</span>
<span class="a t" style="top:471px;height:28px;line-height:28px;font-size:19.8px;color:#161a35;letter-spacing:0.255px;left:1508.51px;">match filters</span>
<svg class="a" style="left:1475.3px;top:516px" width="282.3" height="4" viewBox="0 0 282.3 4"><rect x="0" y="1.40" width="282.3" height="1.3" fill="#e3e8f1"/></svg>
<span class="a t" style="top:551px;height:24px;line-height:24px;font-size:17px;color:#4c5878;-webkit-text-stroke:0.63px #4c5878;letter-spacing:0.443px;left:1474.45px;">Show in all tables for me only</span>
<svg class="a" style="left:1479px;top:600px;" width="19" height="15" fill="none"><g transform="translate(0.20 0.30) scale(1.0000 1.0000)"><path d="M0.9 6.7L5.9 11.8L16.1 1.0" stroke="#0f1230" stroke-width="2.45" stroke-linejoin="miter"/></g></svg>
<span class="a t" style="top:594px;height:28px;line-height:28px;font-size:19.8px;color:#161a35;letter-spacing:-0.164px;left:1508.51px;">Parent row</span>
<span class="a t" style="top:640px;height:28px;line-height:28px;font-size:19.8px;color:#161a35;left:1508.51px;">Cell borders</span>
<svg class="a" style="left:1475.3px;top:685px" width="282.3" height="4" viewBox="0 0 282.3 4"><rect x="0" y="1.70" width="282.3" height="1.3" fill="#e3e8f1"/></svg>
<svg class="a" style="left:1479px;top:711px;" width="18" height="19" fill="none"><g transform="translate(0.00 0.20) scale(0.9000 0.9514)"><path d="M9 12.6V1.2M4.8 5.2L9 1L13.2 5.2" stroke="#161a35" stroke-width="1.3" stroke-linejoin="round" stroke-linecap="round"/><path d="M0.8 11.6V17.6H17.2V11.6" stroke="#161a35" stroke-width="1.3" stroke-linejoin="round"/></g></svg>
<span class="a t" style="top:708px;height:28px;line-height:28px;font-size:19.8px;color:#161a35;letter-spacing:0.019px;left:1508.51px;">Export this table to Excel</span>
<svg class="a" style="left:1475.3px;top:753px" width="282.3" height="4" viewBox="0 0 282.3 4"><rect x="0" y="1.40" width="282.3" height="1.3" fill="#e3e8f1"/></svg>
<svg class="a" style="left:1477px;top:779px;" width="21" height="21" fill="none"><g transform="translate(0.00 0.00) scale(0.8333 0.8333)"><circle cx="12" cy="12" r="10.9" stroke="#161a35" stroke-width="1.4"/><path d="M15 9.1C14.7 7.9 13.6 7.2 12 7.2C10.2 7.2 9 8.1 9 9.5C9 12.8 15.2 11 15.2 14.4C15.2 15.9 13.9 16.8 12 16.8C10.2 16.8 9 16 8.7 14.7M12 5.2V7.2M12 16.8V18.8" stroke="#161a35" stroke-width="1.3" stroke-linecap="round"/></g></svg>
<span class="a t" style="top:776px;height:28px;line-height:28px;font-size:19.8px;color:#161a35;letter-spacing:0.020px;left:1508.51px;">Financial settings</span>
<svg class="a" style="left:1742px;top:783px;" width="9" height="13" fill="none"><g transform="translate(0.80 0.50) scale(1.0000 1.0000)"><path d="M0.65 0.65L5.6499999999999995 5.5L0.65 10.35" stroke="#3a4058" stroke-width="1.3" stroke-linecap="round" stroke-linejoin="round"/></g></svg>
<svg class="a" style="left:1479px;top:825px;" width="18" height="19" fill="none"><g transform="translate(0.00 0.20) scale(0.9000 0.9514)"><path d="M9 12.6V1.2M4.8 5.2L9 1L13.2 5.2" stroke="#161a35" stroke-width="1.3" stroke-linejoin="round" stroke-linecap="round"/><path d="M0.8 11.6V17.6H17.2V11.6" stroke="#161a35" stroke-width="1.3" stroke-linejoin="round"/></g></svg>
<span class="a t" style="top:822px;height:28px;line-height:28px;font-size:19.8px;color:#161a35;letter-spacing:0.035px;left:1508.51px;">Export project to Excel</span>
<svg class="a" style="left:1479px;top:871px;" width="18" height="20" fill="none"><g transform="translate(0.00 0.60) scale(0.9000 0.9514)"><path d="M9 0.8V12.2M4.8 8.2L9 12.4L13.2 8.2" stroke="#161a35" stroke-width="1.3" stroke-linejoin="round" stroke-linecap="round"/><path d="M0.8 11.6V17.6H17.2V11.6" stroke="#161a35" stroke-width="1.3" stroke-linejoin="round"/></g></svg>
<span class="a t" style="top:868px;height:28px;line-height:28px;font-size:19.8px;color:#161a35;letter-spacing:0.424px;left:1508.51px;">Import</span>
<svg class="a" style="left:1742px;top:875px;" width="9" height="13" fill="none"><g transform="translate(0.80 0.70) scale(1.0000 1.0000)"><path d="M0.65 0.65L5.6499999999999995 5.5L0.65 10.35" stroke="#3a4058" stroke-width="1.3" stroke-linecap="round" stroke-linejoin="round"/></g></svg>
<svg class="a" style="left:1662px;top:118px;" width="58" height="52" viewBox="0 0 58 52"><rect x="5.00" y="5.00" width="46.20" height="40.00" rx="10.5" fill="none" stroke="#0bce60" stroke-width="6"/></svg>
<svg class="a" style="left:1460px;top:579px;" width="250" height="57" viewBox="0 0 250 57"><rect x="5.00" y="5.00" width="238.30" height="45.00" rx="10.5" fill="none" stroke="#0bce60" stroke-width="6"/></svg>
<div class="a" style="left:0px;top:0px;width:349px;height:1100px;background:#04434d;"></div>
<svg class="a" style="left:22px;top:25px;" width="45" height="29" fill="none"><g transform="translate(0.00 0.00) scale(1.0000 1.0000)"><path fill="#fff" d="M0.4 9.9H13.1L23.7 21.2L17.5 27.7Z M31.7 -0.1H43.9L26.9 17.8L20.6 11.2Z"/></g></svg>
<span class="a t" style="top:19px;height:42px;line-height:42px;font-size:30.3px;color:#ffffff;font-weight:700;left:69.89px;letter-spacing:0.3px;transform:scaleX(1.148);transform-origin:0 50%;">wrike</span>
<svg class="a" style="left:266px;top:24px;" width="34" height="34" fill="none"><g transform="translate(0.00 0.00) scale(1.0000 1.0000)"><defs><clipPath id="av4"><rect x="0" y="0" width="33" height="33" rx="8"/></clipPath><filter id="av4f" x="-10%" y="-10%" width="120%" height="120%"><feGaussianBlur stdDeviation="0.55"/></filter></defs><g clip-path="url(#av4)"><g filter="url(#av4f)"><rect x="-3" y="-3" width="39" height="39" fill="#e3e3e1"/><rect x="-3" y="-3" width="39" height="5.5" fill="#c9c6be"/><rect x="22" y="2" width="14" height="34" fill="#eef0f3"/><rect x="26.5" y="8" width="2.2" height="20" fill="#d9dadd"/><rect x="3" y="5.2" width="30" height="2.6" fill="#d2cbbd"/><rect x="-2" y="12" width="9" height="1.4" fill="#cfcfd0"/><rect x="-2" y="18" width="8" height="1.2" fill="#d4d4d6"/><path d="M17 1.6C21.5 1.2 25.4 4.4 25.6 9.4C27.6 13.6 27 19.4 25 23.6C23 25.2 20.5 24.6 17.3 24.6C13.8 24.6 10.6 25.4 8.8 23.4C6.6 19.6 6.4 13.8 8.6 9.6C9.4 4.6 12.6 1.8 17 1.6Z" fill="#3d302d"/><ellipse cx="9.4" cy="19" rx="2.6" ry="5" fill="#4a3a35"/><ellipse cx="24.8" cy="18.6" rx="2.4" ry="5" fill="#46362f"/><path d="M13.6 20.5H21.4L21.8 33H12.6Z" fill="#e7bba6"/><ellipse cx="17.5" cy="14" rx="4.9" ry="7" fill="#dfa58d"/><ellipse cx="17.5" cy="9" rx="4.4" ry="2.6" fill="#e6b39c"/><path d="M12.4 11.4H22.6" stroke="#2f2624" stroke-width="1.1"/><rect x="12.9" y="10.9" width="4.1" height="2.9" rx="1" fill="none" stroke="#3a2f2d" stroke-width=".8"/><rect x="18" y="10.9" width="4.1" height="2.9" rx="1" fill="none" stroke="#3a2f2d" stroke-width=".8"/><path d="M14.9 17Q17.5 19.4 20.1 17Q17.5 18 14.9 17Z" fill="#fff" stroke="#fff" stroke-width=".7"/><path d="M-1 36L1.2 30.2L13.2 24.8L17.2 36Z" fill="#0ea68f"/><path d="M34 36L31 29.6L21.8 24.8L18 36Z" fill="#13b59c"/><path d="M3 31L12 27L14 33L4 34Z" fill="#0b8f7b" opacity=".55"/><path d="M13.2 24.8L17.5 33.5L21.8 24.8L17.5 27.6Z" fill="#edc7b4"/></g></g></g></svg>
<svg class="a" style="left:315px;top:31px;" width="12" height="20" fill="none"><g transform="translate(0.50 0.00) scale(1.0000 1.0000)"><path d="M9.05 0.95L0.95 9.25L9.05 17.55" stroke="#e9f0f1" stroke-width="2.15" stroke-linecap="round" stroke-linejoin="round"/></g></svg>
<svg class="a" style="left:24px;top:92px;" width="18" height="19" fill="none"><g transform="translate(0.00 0.50) scale(0.7083 0.7083)"><circle cx="9.6" cy="9.6" r="8.6" stroke="#b3cbce" stroke-width="2.15"/><path d="M15.8 15.8L22.6 22.6" stroke="#b3cbce" stroke-width="2.37" stroke-linecap="round"/></g></svg>
<span class="a t" style="top:87px;height:28px;line-height:28px;font-size:19.8px;color:#b3cbce;letter-spacing:-0.321px;left:55.21px;">Search</span>
<span class="a t" style="top:88px;height:27px;line-height:27px;font-size:19px;color:#b3cbce;letter-spacing:-1.200px;left:295.65px;">⌘K</span>
<svg class="a" style="left:24px;top:134px;" width="19" height="21" fill="none"><g transform="translate(0.50 0.00) scale(0.9722 0.9756)"><path d="M9 2.6V1.3M9 2.6C5.6 2.6 3.7 5.2 3.7 8.2V12.5L1.3 16.6H16.7L14.3 12.5V8.2C14.3 5.2 12.4 2.6 9 2.6Z" stroke="#b3cbce" stroke-width="1.47" stroke-linejoin="round" stroke-linecap="round"/><path d="M7 17.2A2.1 2.1 0 0 0 11 17.2" stroke="#b3cbce" stroke-width="1.47"/></g></svg>
<span class="a t" style="top:131px;height:28px;line-height:28px;font-size:19.8px;color:#b3cbce;letter-spacing:-0.156px;left:55.41px;">Inbox</span>
<svg class="a" style="left:24px;top:177px;" width="19" height="20" fill="none"><g transform="translate(0.50 0.50) scale(1.0000 1.0000)"><rect x="0.8" y="2.5" width="15.4" height="14.6" rx="1.6" stroke="#b3cbce" stroke-width="1.47"/><path d="M0.8 7H16.2M4.9 0.6V4M12.1 0.6V4" stroke="#b3cbce" stroke-width="1.47"/></g></svg>
<span class="a t" style="top:174px;height:28px;line-height:28px;font-size:19.8px;color:#b3cbce;letter-spacing:-0.186px;left:55.21px;">Calendars</span>
<svg class="a" style="left:24px;top:228px;" width="19" height="6" fill="none"><g transform="translate(0.00 0.50) scale(1.0000 1.0000)"><circle cx="2.1" cy="2.1" r="2.1" fill="#b3cbce"/><circle cx="9.0" cy="2.1" r="2.1" fill="#b3cbce"/><circle cx="15.9" cy="2.1" r="2.1" fill="#b3cbce"/></g></svg>
<span class="a t" style="top:218px;height:28px;line-height:28px;font-size:19.8px;color:#b3cbce;letter-spacing:0.035px;left:55.21px;">More</span>
<div class="a" style="left:1px;top:274px;width:348px;height:1px;background:#2b606a;"></div>
<span class="a t" style="top:306px;height:28px;line-height:28px;font-size:19.8px;color:#b3cbce;letter-spacing:-0.103px;left:22.01px;">Space</span>
<svg class="a" style="left:302px;top:316px;" width="20" height="6" fill="none"><g transform="translate(0.50 0.00) scale(1.0000 1.0000)"><circle cx="2.1" cy="2.1" r="2.1" fill="#d5e2e4"/><circle cx="9.25" cy="2.1" r="2.1" fill="#d5e2e4"/><circle cx="16.4" cy="2.1" r="2.1" fill="#d5e2e4"/></g></svg>
<div class="a" style="left:12px;top:339.5px;width:325px;height:43px;border-radius:11px;border:1.2px solid #3b6e77;"></div>
<svg class="a" style="left:27px;top:354px;" width="18" height="16" fill="none"><g transform="translate(0.00 0.00) scale(0.7083 0.7500)"><path fill="#4fb04f" d="M12 0.5L0.3 6.6L12 12.7L21 8V14.8H23.7V6.6Z"/><path fill="#4fb04f" d="M4.6 10.9V15.6C6.3 18 9 19.3 12 19.3S17.7 18 19.4 15.6V10.9L12 14.8Z"/></g></svg>
<span class="a t" style="top:348px;height:28px;line-height:28px;font-size:19.8px;color:#eef3f4;letter-spacing:-0.214px;left:56.51px;">Knowledge Base</span>
<svg class="a" style="left:308px;top:359px;" width="12" height="8" fill="none"><g transform="translate(0.00 0.00) scale(1.0000 1.0000)"><path d="M0.7 0.7L5.5 5.8L10.3 0.7" stroke="#b4cace" stroke-width="1.58" stroke-linecap="round" stroke-linejoin="round"/></g></svg>
<svg class="a" style="left:22px;top:405px;" width="22" height="19" fill="none"><g transform="translate(0.50 0.00) scale(0.9762 1.0000)"><path d="M8.2 4.6L12 0.9L20.1 9L12 17.1L8.2 13.4" stroke="#b4cace" stroke-width="1.47" stroke-linejoin="round" stroke-linecap="round"/><path d="M0.8 9H11.6M8 5.4L11.6 9L8 12.6" stroke="#b4cace" stroke-width="1.47" stroke-linejoin="round" stroke-linecap="round"/></g></svg>
<span class="a t" style="top:401px;height:28px;line-height:28px;font-size:19.8px;color:#eef3f4;letter-spacing:-0.074px;left:55.21px;">Space overview</span>
<svg class="a" style="left:302px;top:404px;" width="22" height="22" fill="none"><g transform="translate(0.50 0.50) scale(0.8250 0.8250)"><path d="M10.11 0.96L13.89 0.96L14.13 3.67L16.39 4.60L18.47 2.85L21.15 5.53L19.40 7.61L20.33 9.87L23.04 10.11L23.04 13.89L20.33 14.13L19.40 16.39L21.15 18.47L18.47 21.15L16.39 19.40L14.13 20.33L13.89 23.04L10.11 23.04L9.87 20.33L7.61 19.40L5.53 21.15L2.85 18.47L4.60 16.39L3.67 14.13L0.96 13.89L0.96 10.11L3.67 9.87L4.60 7.61L2.85 5.53L5.53 2.85L7.61 4.60L9.87 3.67Z" stroke="#b4cace" stroke-width="1.58" stroke-linejoin="round"/><circle cx="12" cy="12" r="3.9" stroke="#b4cace" stroke-width="1.58"/></g></svg>
<svg class="a" style="left:28px;top:466px;" width="12" height="8" fill="none"><g transform="translate(0.00 0.00) scale(1.0000 1.0000)"><path d="M0.7 0.7L5.5 5.8L10.3 0.7" stroke="#b4cace" stroke-width="1.58" stroke-linecap="round" stroke-linejoin="round"/></g></svg>
<span class="a t" style="top:456px;height:28px;line-height:28px;font-size:19.8px;color:#b3cbce;letter-spacing:0.124px;left:55.21px;">Tools</span>
<svg class="a" style="left:304px;top:460px;" width="17" height="17" fill="none"><g transform="translate(0.00 0.50) scale(1.0000 1.0000)"><path d="M7.75 0V15.5M0 7.75H15.5" stroke="#b4cace" stroke-width="1.69"/></g></svg>
<svg class="a" style="left:56px;top:504px;" width="20" height="19" fill="none"><g transform="translate(0.50 0.00) scale(1.0000 1.0000)"><rect x="0.8" y="0.8" width="16.4" height="16.4" rx="1.8" stroke="#b4cace" stroke-width="1.47"/><path d="M8.2 0.8V17.2M0.8 9.4H8.2" stroke="#b4cace" stroke-width="1.47"/></g></svg>
<span class="a t" style="top:499px;height:28px;line-height:28px;font-size:19.8px;color:#eef3f4;letter-spacing:-0.075px;left:88.01px;">Assigning and Following</span>
<svg class="a" style="left:56px;top:547px;" width="20" height="19" fill="none"><g transform="translate(0.50 0.00) scale(1.0000 1.0000)"><rect x="0.8" y="0.8" width="16.4" height="16.4" rx="1.8" stroke="#b4cace" stroke-width="1.47"/><path d="M8.2 0.8V17.2M0.8 9.4H8.2" stroke="#b4cace" stroke-width="1.47"/></g></svg>
<span class="a t" style="top:543px;height:28px;line-height:28px;font-size:19.8px;color:#eef3f4;letter-spacing:0.134px;left:88.01px;">Test</span>
<svg class="a" style="left:28px;top:607px;" width="12" height="8" fill="none"><g transform="translate(0.00 0.50) scale(1.0000 1.0000)"><path d="M0.7 0.7L5.5 5.8L10.3 0.7" stroke="#b4cace" stroke-width="1.58" stroke-linecap="round" stroke-linejoin="round"/></g></svg>
<span class="a t" style="top:597px;height:28px;line-height:28px;font-size:19.8px;color:#b3cbce;letter-spacing:0.045px;left:55.21px;">Projects and folders</span>
<svg class="a" style="left:304px;top:602px;" width="17" height="17" fill="none"><g transform="translate(0.00 0.00) scale(1.0000 1.0000)"><path d="M7.75 0V15.5M0 7.75H15.5" stroke="#b4cace" stroke-width="1.69"/></g></svg>
<svg class="a" style="left:55px;top:642px;" width="23" height="23" fill="none"><g transform="translate(0.00 0.50) scale(0.9778 0.9556)"><path d="M6.6 1.2L3.2 2.1C1.7 2.5 1 3.8 1.3 5.4C3 13.3 9.4 19.7 17 21.2C18.6 21.5 19.9 20.8 20.3 19.3L21.2 16L15.6 13L13.4 15.3C10.8 14.1 8.7 12 7.5 9.4L9.6 7.1Z" stroke="#c6d6d9" stroke-width="1.47" stroke-linejoin="round"/></g></svg>
<span class="a t" style="top:640px;height:28px;line-height:28px;font-size:19.8px;color:#eef3f4;letter-spacing:-0.014px;left:88.01px;">Ask My Consultant</span>
<svg class="a" style="left:31px;top:691px;" width="8" height="13" fill="none"><g transform="translate(0.50 0.00) scale(1.0000 1.0000)"><path d="M0.7 0.7L5.8 5.75L0.7 10.8" stroke="#b4cace" stroke-width="1.58" stroke-linecap="round" stroke-linejoin="round"/></g></svg>
<svg class="a" style="left:57px;top:686px;" width="17" height="21" fill="none"><g transform="translate(0.50 0.00) scale(0.9688 0.9900)"><rect x="0.8" y="2.6" width="14.4" height="16.6" rx="1.4" stroke="#b4cace" stroke-width="1.47"/><rect x="4" y="0.7" width="8" height="3.4" rx="1.1" stroke="#b4cace" stroke-width="1.32" fill="none"/><path d="M3.6 9.2H12.4M3.6 12.4H12.4" stroke="#b4cace" stroke-width="1.47"/></g></svg>
<span class="a t" style="top:684px;height:28px;line-height:28px;font-size:19.8px;color:#eef3f4;letter-spacing:-0.214px;left:88.01px;">Knowledge Base</span>
<svg class="a" style="left:28px;top:737px;" width="12" height="8" fill="none"><g transform="translate(0.00 0.50) scale(1.0000 1.0000)"><path d="M0.7 0.7L5.5 5.8L10.3 0.7" stroke="#b4cace" stroke-width="1.58" stroke-linecap="round" stroke-linejoin="round"/></g></svg>
<svg class="a" style="left:56px;top:732px;" width="21" height="17" fill="none"><g transform="translate(0.00 0.20) scale(1.0000 0.9868)"><path d="M0.8 13V2.2C0.8 1.4 1.4 0.8 2.2 0.8H7.2L9 3.4H17.8C18.6 3.4 19.2 4 19.2 4.8V13C19.2 13.8 18.6 14.4 17.8 14.4H2.2C1.4 14.4 0.8 13.8 0.8 13Z" stroke="#c6d6d9" stroke-width="1.58" stroke-linejoin="round"/><path d="M0.8 3.5H9" stroke="#c6d6d9" stroke-width="1.42"/></g></svg>
<span class="a t" style="top:727px;height:28px;line-height:28px;font-size:19.8px;color:#eef3f4;letter-spacing:-0.053px;left:88.01px;">Sample Blueprints</span>
<div class="a" style="left:12px;top:762px;width:325px;height:43.5px;background:#1f555f;border-radius:11px;"></div>
<svg class="a" style="left:64px;top:778px;" width="8" height="13" fill="none"><g transform="translate(0.50 0.30) scale(1.0000 1.0000)"><path d="M0.7 0.7L5.8 5.75L0.7 10.8" stroke="#b4cace" stroke-width="1.58" stroke-linecap="round" stroke-linejoin="round"/></g></svg>
<svg class="a" style="left:90px;top:774px;" width="17" height="21" fill="none"><g transform="translate(0.00 0.00) scale(0.9688 0.9900)"><rect x="0.8" y="2.6" width="14.4" height="16.6" rx="1.4" stroke="#b4cace" stroke-width="1.47"/><rect x="4" y="0.7" width="8" height="3.4" rx="1.1" stroke="#b4cace" stroke-width="1.32" fill="none"/><path d="M3.6 9.2H12.4M3.6 12.4H12.4" stroke="#b4cace" stroke-width="1.47"/></g></svg>
<span class="a t" style="top:771px;height:28px;line-height:28px;font-size:19.8px;color:#eef3f4;letter-spacing:-0.163px;left:121.31px;">1. Creative Deliverabl...</span>
<svg class="a" style="left:64px;top:821px;" width="8" height="14" fill="none"><g transform="translate(0.50 0.75) scale(1.0000 1.0000)"><path d="M0.7 0.7L5.8 5.75L0.7 10.8" stroke="#b4cace" stroke-width="1.58" stroke-linecap="round" stroke-linejoin="round"/></g></svg>
<svg class="a" style="left:90px;top:817px;" width="17" height="22" fill="none"><g transform="translate(0.00 0.45) scale(0.9688 0.9900)"><rect x="0.8" y="2.6" width="14.4" height="16.6" rx="1.4" stroke="#b4cace" stroke-width="1.47"/><rect x="4" y="0.7" width="8" height="3.4" rx="1.1" stroke="#b4cace" stroke-width="1.32" fill="none"/><path d="M3.6 9.2H12.4M3.6 12.4H12.4" stroke="#b4cace" stroke-width="1.47"/></g></svg>
<span class="a t" style="top:815px;height:28px;line-height:28px;font-size:19.8px;color:#eef3f4;letter-spacing:-0.288px;left:121.31px;">2. Phased Campaign ...</span>
<svg class="a" style="left:64px;top:865px;" width="8" height="13" fill="none"><g transform="translate(0.50 0.20) scale(1.0000 1.0000)"><path d="M0.7 0.7L5.8 5.75L0.7 10.8" stroke="#b4cace" stroke-width="1.58" stroke-linecap="round" stroke-linejoin="round"/></g></svg>
<svg class="a" style="left:89px;top:862px;" width="22" height="17" fill="none"><g transform="translate(0.30 0.90) scale(1.0000 0.9868)"><path d="M0.8 13V2.2C0.8 1.4 1.4 0.8 2.2 0.8H7.2L9 3.4H17.8C18.6 3.4 19.2 4 19.2 4.8V13C19.2 13.8 18.6 14.4 17.8 14.4H2.2C1.4 14.4 0.8 13.8 0.8 13Z" stroke="#b4cace" stroke-width="1.47" stroke-linejoin="round"/><path d="M0.8 3.5H9" stroke="#b4cace" stroke-width="1.32"/></g></svg>
<span class="a t" style="top:858px;height:28px;line-height:28px;font-size:19.8px;color:#eef3f4;letter-spacing:-0.079px;left:121.31px;">3. Services Timeline (...</span>
<svg class="a" style="left:64px;top:908px;" width="8" height="14" fill="none"><g transform="translate(0.50 0.65) scale(1.0000 1.0000)"><path d="M0.7 0.7L5.8 5.75L0.7 10.8" stroke="#b4cace" stroke-width="1.58" stroke-linecap="round" stroke-linejoin="round"/></g></svg>
<svg class="a" style="left:89px;top:906px;" width="22" height="17" fill="none"><g transform="translate(0.30 0.35) scale(1.0000 0.9868)"><path d="M0.8 13V2.2C0.8 1.4 1.4 0.8 2.2 0.8H7.2L9 3.4H17.8C18.6 3.4 19.2 4 19.2 4.8V13C19.2 13.8 18.6 14.4 17.8 14.4H2.2C1.4 14.4 0.8 13.8 0.8 13Z" stroke="#b4cace" stroke-width="1.47" stroke-linejoin="round"/><path d="M0.8 3.5H9" stroke="#b4cace" stroke-width="1.32"/></g></svg>
<span class="a t" style="top:901px;height:28px;line-height:28px;font-size:19.8px;color:#eef3f4;letter-spacing:-0.079px;left:121.31px;">4. Task Based (Ticket...</span>
<svg class="a" style="left:64px;top:952px;" width="8" height="13" fill="none"><g transform="translate(0.50 0.10) scale(1.0000 1.0000)"><path d="M0.7 0.7L5.8 5.75L0.7 10.8" stroke="#b4cace" stroke-width="1.58" stroke-linecap="round" stroke-linejoin="round"/></g></svg>
<svg class="a" style="left:90px;top:947px;" width="17" height="22" fill="none"><g transform="translate(0.00 0.80) scale(0.9688 0.9900)"><rect x="0.8" y="2.6" width="14.4" height="16.6" rx="1.4" stroke="#b4cace" stroke-width="1.47"/><rect x="4" y="0.7" width="8" height="3.4" rx="1.1" stroke="#b4cace" stroke-width="1.32" fill="none"/><path d="M3.6 9.2H12.4M3.6 12.4H12.4" stroke="#b4cace" stroke-width="1.47"/></g></svg>
<span class="a t" style="top:945px;height:28px;line-height:28px;font-size:19.8px;color:#eef3f4;letter-spacing:-0.072px;left:121.31px;">5. Waterfall Developm...</span>
<svg class="a" style="left:64px;top:995px;" width="8" height="14" fill="none"><g transform="translate(0.50 0.55) scale(1.0000 1.0000)"><path d="M0.7 0.7L5.8 5.75L0.7 10.8" stroke="#b4cace" stroke-width="1.58" stroke-linecap="round" stroke-linejoin="round"/></g></svg>
<svg class="a" style="left:89px;top:993px;" width="22" height="17" fill="none"><g transform="translate(0.30 0.25) scale(1.0000 0.9868)"><path d="M0.8 13V2.2C0.8 1.4 1.4 0.8 2.2 0.8H7.2L9 3.4H17.8C18.6 3.4 19.2 4 19.2 4.8V13C19.2 13.8 18.6 14.4 17.8 14.4H2.2C1.4 14.4 0.8 13.8 0.8 13Z" stroke="#b4cace" stroke-width="1.47" stroke-linejoin="round"/><path d="M0.8 3.5H9" stroke="#b4cace" stroke-width="1.32"/></g></svg>
<span class="a t" style="top:988px;height:28px;line-height:28px;font-size:19.8px;color:#eef3f4;letter-spacing:-0.115px;left:121.31px;">6. Sprint Developmen...</span>
<svg class="a" style="left:64px;top:1039px;" width="8" height="13" fill="none"><g transform="translate(0.50 0.00) scale(1.0000 1.0000)"><path d="M0.7 0.7L5.8 5.75L0.7 10.8" stroke="#b4cace" stroke-width="1.58" stroke-linecap="round" stroke-linejoin="round"/></g></svg>
<svg class="a" style="left:89px;top:1036px;" width="22" height="17" fill="none"><g transform="translate(0.30 0.70) scale(1.0000 0.9868)"><path d="M0.8 13V2.2C0.8 1.4 1.4 0.8 2.2 0.8H7.2L9 3.4H17.8C18.6 3.4 19.2 4 19.2 4.8V13C19.2 13.8 18.6 14.4 17.8 14.4H2.2C1.4 14.4 0.8 13.8 0.8 13Z" stroke="#b4cace" stroke-width="1.47" stroke-linejoin="round"/><path d="M0.8 3.5H9" stroke="#b4cace" stroke-width="1.32"/></g></svg>
<span class="a t" style="top:1032px;height:28px;line-height:28px;font-size:19.8px;color:#eef3f4;letter-spacing:0.174px;left:121.31px;">7. Hybrid Agile-waterf...</span>
<svg class="a" style="left:64px;top:1082px;opacity:0.38;" width="8" height="13" fill="none"><g transform="translate(0.50 0.45) scale(1.0000 1.0000)"><path d="M0.7 0.7L5.8 5.75L0.7 10.8" stroke="#b4cace" stroke-width="1.58" stroke-linecap="round" stroke-linejoin="round"/></g></svg>
<svg class="a" style="left:89px;top:1080px;opacity:0.38;" width="22" height="17" fill="none"><g transform="translate(0.30 0.15) scale(1.0000 0.9868)"><path d="M0.8 13V2.2C0.8 1.4 1.4 0.8 2.2 0.8H7.2L9 3.4H17.8C18.6 3.4 19.2 4 19.2 4.8V13C19.2 13.8 18.6 14.4 17.8 14.4H2.2C1.4 14.4 0.8 13.8 0.8 13Z" stroke="#b4cace" stroke-width="1.47" stroke-linejoin="round"/><path d="M0.8 3.5H9" stroke="#b4cace" stroke-width="1.32"/></g></svg>
<span class="a t" style="top:1075px;height:28px;line-height:28px;font-size:19.8px;color:#eef3f4;letter-spacing:-0.104px;left:121.31px;opacity:0.38;">8. PMO Structure (Por...</span>
<svg class="a" style="left:0;top:0" width="1802" height="1100" viewBox="0 0 1802 1100" fill="none">
<path fill-rule="evenodd" fill="#000" d="M0 0H1802V1100H0Z M1 3H1801V1088.5a10.5 10.5 0 0 1 -10.5 10.5H11.5a10.5 10.5 0 0 1 -10.5 -10.5Z"/>
<path d="M1.5 3V1088a11 11 0 0 0 11 10.5H349" stroke="#4a7d86" stroke-width="1" opacity=".8"/>
<rect x="0" y="0" width="1802" height="1" fill="#161616"/>
<rect x="1" y="1" width="1800" height="1" fill="#343434"/>
<rect x="0" y="2" width="1802" height="1" fill="#121212"/>
</svg>
</div>
</body></html>
